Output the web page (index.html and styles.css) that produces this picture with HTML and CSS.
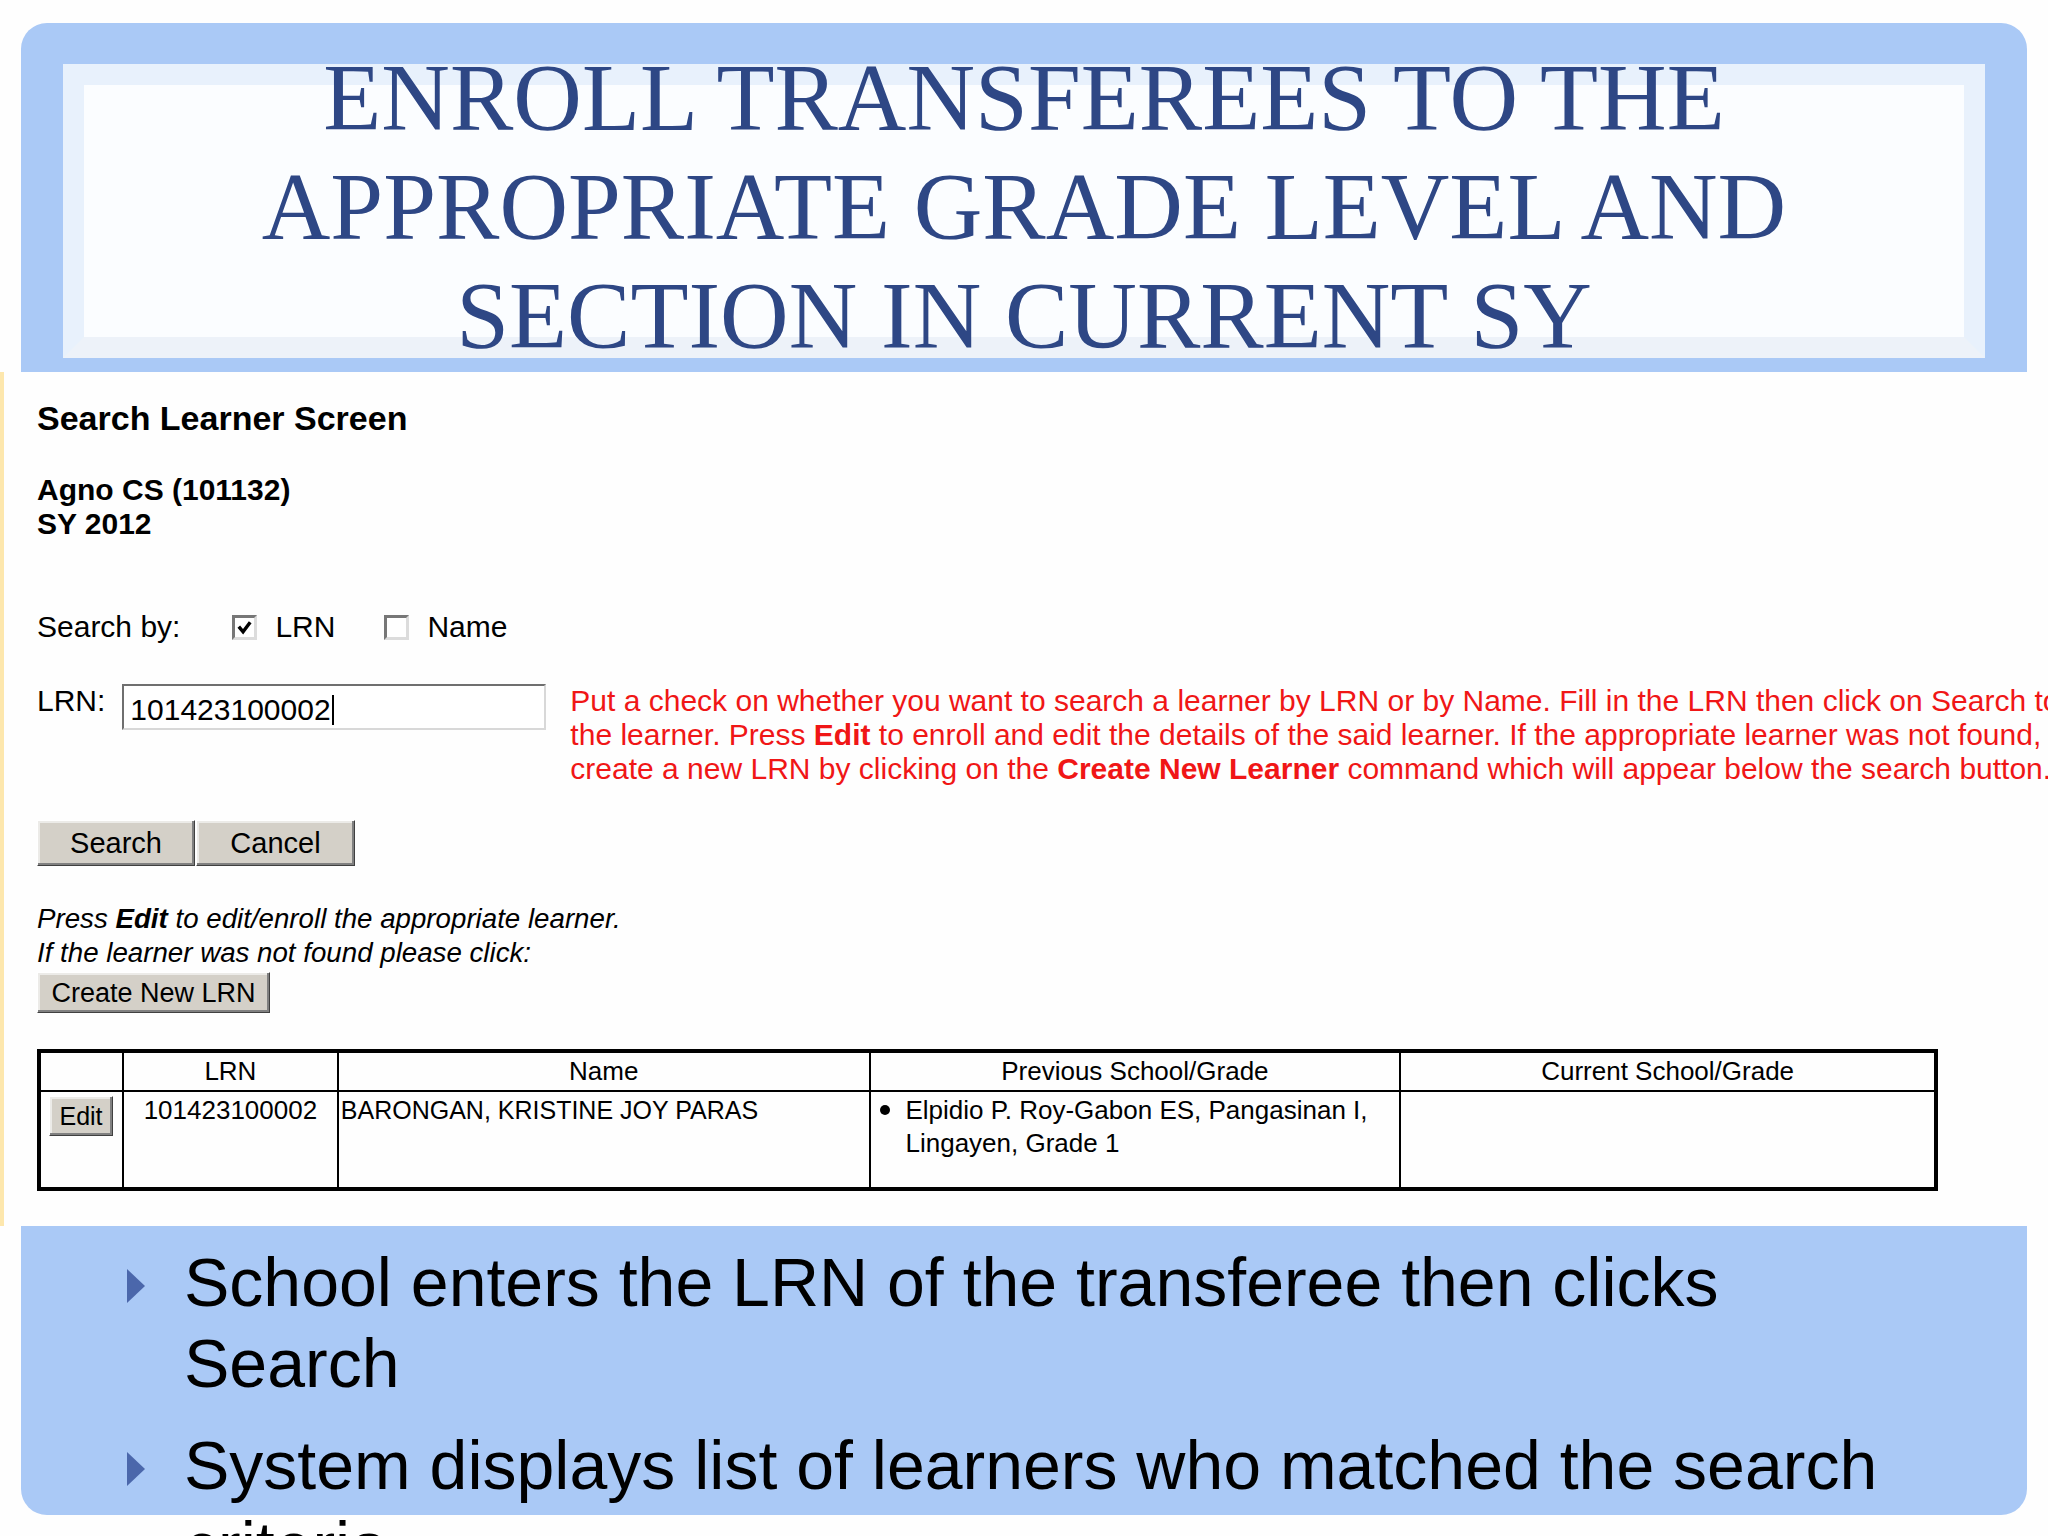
FILE: index.html
```html
<!DOCTYPE html>
<html lang="en">
<head>
<meta charset="utf-8">
<title>Enroll Transferees</title>
<link rel="stylesheet" href="styles.css">
</head>
<body>
<div class="slide">
  <header class="title-box">
    <div class="title-panel">
      <h1 class="title">ENROLL TRANSFEREES TO THE<br>APPROPRIATE GRADE LEVEL AND<br>SECTION IN CURRENT SY</h1>
    </div>
  </header>

  <main class="screen">
    <h2 class="screen-title">Search Learner Screen</h2>
    <p class="school">Agno CS (101132)<br>SY 2012</p>

    <div class="search-by">
      <span class="label">Search by:</span>
      <span class="check"><svg viewBox="0 0 20 20" width="20" height="20"><path d="M4 9 L8.5 14.5 L16 4.5" fill="none" stroke="#000" stroke-width="3.6"/></svg></span>
      <span class="opt">LRN</span>
      <span class="check check-second"></span>
      <span class="opt">Name</span>
    </div>

    <div class="lrn-row">
      <span class="label">LRN:</span>
      <div class="field">101423100002<span class="caret"></span></div>
      <p class="hint">Put a check on whether you want to search a learner by LRN or by Name. Fill in the LRN then click on Search to<br>the learner. Press <b>Edit</b> to enroll and edit the details of the said learner. If the appropriate learner was not found,<br>create a new LRN by clicking on the <b>Create New Learner</b> command which will appear below the search button.</p>
    </div>

    <div class="actions">
      <button class="btn btn-lg">Search</button>
      <button class="btn btn-lg">Cancel</button>
    </div>

    <p class="note">Press <b>Edit</b> to edit/enroll the appropriate learner.<br>If the learner was not found please click:</p>
    <button class="btn btn-create">Create New LRN</button>

    <table class="results">
      <colgroup>
        <col class="c-edit"><col class="c-lrn"><col class="c-name"><col class="c-prev"><col class="c-cur">
      </colgroup>
      <thead>
        <tr><th></th><th>LRN</th><th>Name</th><th>Previous School/Grade</th><th>Current School/Grade</th></tr>
      </thead>
      <tbody>
        <tr>
          <td class="edit-cell"><button class="btn btn-edit">Edit</button></td>
          <td class="lrn-cell">101423100002</td>
          <td class="name-cell">BARONGAN, KRISTINE JOY PARAS</td>
          <td><ul class="prev-list"><li>Elpidio P. Roy-Gabon ES, Pangasinan I,<br>Lingayen, Grade 1</li></ul></td>
          <td></td>
        </tr>
      </tbody>
    </table>
  </main>

  <section class="summary">
    <ul class="points">
      <li>School enters the LRN of the transferee then clicks Search</li>
      <li>System displays list of learners who matched the search criteria</li>
    </ul>
  </section>
</div>
</body>
</html>
```

FILE: styles.css
```css
html, body {
  margin: 0;
  padding: 0;
}
body {
  width: 2048px;
  height: 1536px;
  overflow: hidden;
  background: #fefefe;
  font-family: "Liberation Sans", Arial, sans-serif;
  color: #000;
}
.slide {
  padding-top: 23px;
}

/* ---------- Title ---------- */
.title-box {
  margin: 0 21px;
  height: 349px;
  box-sizing: border-box;
  padding: 41px 42px 14px;
  background: #aac9f6;
  border-radius: 26px 26px 0 0;
}
.title-panel {
  height: 294px;
  box-sizing: border-box;
  border: 21px solid #e8f1fc;
  border-bottom-color: #edf2f9;
  background: #fbfdff;
}
.title {
  margin: -41px 0 0;
  font-family: "Liberation Serif", "Times New Roman", serif;
  font-weight: normal;
  font-size: 95px;
  line-height: 109px;
  color: #2e4785;
  text-align: center;
  white-space: nowrap;
}

/* ---------- Screen capture ---------- */
.screen {
  height: 854px;
  box-sizing: border-box;
  border-left: 4px solid #fde7ad;
  padding-left: 33px;
  overflow: hidden;
}
.screen-title {
  margin: 26px 0 0;
  font-size: 34px;
  line-height: 40px;
  font-weight: bold;
}
.school {
  margin: 35px 0 0;
  font-size: 30px;
  line-height: 34px;
  font-weight: bold;
}
.search-by {
  margin-top: 69px;
  display: flex;
  align-items: center;
  height: 34px;
  font-size: 30px;
  line-height: 34px;
}
.label {
  flex-shrink: 0;
  font-size: 30px;
  line-height: 34px;
}
.check {
  flex-shrink: 0;
  width: 25px;
  height: 25px;
  box-sizing: border-box;
  border: 3px solid;
  border-color: #777 #dcdcdc #dcdcdc #777;
  background: #fff;
  margin-left: 52px;
  display: flex;
  align-items: center;
  justify-content: center;
}
.check svg {
  width: 19px;
  height: 19px;
}
.check-second {
  margin-left: 49px;
}
.opt {
  margin-left: 18px;
}

.lrn-row {
  margin-top: 40px;
  display: flex;
  align-items: flex-start;
}
.field {
  flex-shrink: 0;
  margin-left: 17px;
  width: 424px;
  height: 46px;
  box-sizing: border-box;
  border: 2px solid;
  border-color: #6f6f6f #d8d8d8 #d8d8d8 #6f6f6f;
  background: #fff;
  padding: 6px 0 0 6px;
  font-size: 30px;
  line-height: 36px;
  display: flex;
  align-items: flex-start;
}
.caret {
  display: inline-block;
  width: 2px;
  height: 30px;
  margin: 3px 0 0 1px;
  background: #000;
}
.hint {
  flex-shrink: 0;
  margin: 0 0 0 24px;
  color: #f01616;
  font-size: 30px;
  line-height: 34px;
  white-space: nowrap;
}

.actions {
  margin-top: 34px;
  display: flex;
}
.btn {
  font-family: "Liberation Sans", Arial, sans-serif;
  color: #000;
  background: #d4d0c8;
  border: 1px solid;
  border-color: #ffffff #404040 #404040 #ffffff;
  box-shadow: inset -2px -2px 0 #808080, inset 2px 2px 0 #ecebe8;
  padding: 0;
  box-sizing: border-box;
  display: block;
}
.btn-lg {
  width: 158px;
  height: 46px;
  font-size: 29px;
  line-height: 40px;
}
.btn-lg + .btn-lg {
  margin-left: 1px;
  width: 159px;
}
.note {
  margin: 36px 0 0;
  font-size: 27.7px;
  line-height: 34px;
  font-style: italic;
}
.btn-create {
  margin-top: 2px;
  width: 233px;
  height: 41px;
  font-size: 27px;
  line-height: 36px;
}

.results {
  margin-top: 36px;
  width: 1901px;
  border-collapse: collapse;
  border: 4px solid #000;
  font-size: 26px;
}
.c-edit { width: 84px; }
.c-lrn { width: 215px; }
.c-name { width: 533px; }
.c-prev { width: 532px; }
.c-cur { width: 537px; }
.results th,
.results td {
  border: 2px solid #000;
  padding: 0 3px;
}
.results th {
  height: 37px;
  font-weight: normal;
  line-height: 33px;
  text-align: center;
}
.results td {
  height: 91px;
  vertical-align: top;
  line-height: 33px;
  padding-top: 2px;
}
.results .lrn-cell {
  text-align: center;
}
.results .name-cell {
  font-size: 25px;
  padding-left: 2px;
}
.results .edit-cell {
  padding: 4px 0 0 8px;
}
.btn-edit {
  width: 64px;
  height: 40px;
  font-size: 25px;
  line-height: 34px;
}
.prev-list {
  list-style: none;
  margin: 0;
  padding: 0 0 0 32px;
  position: relative;
}
.prev-list li::before {
  content: "";
  position: absolute;
  left: 6px;
  top: 11px;
  width: 10px;
  height: 10px;
  border-radius: 50%;
  background: #000;
}

/* ---------- Summary ---------- */
.summary {
  margin: 0 21px;
  height: 289px;
  box-sizing: border-box;
  padding-top: 16px;
  background: #aac9f6;
  border-radius: 0 0 26px 26px;
}
.points {
  list-style: none;
  margin: 0;
  padding: 0 97px 0 163px;
}
.points li {
  position: relative;
  font-size: 68px;
  line-height: 81px;
  color: #000;
}
.points li + li {
  margin-top: 21px;
}
.points li::before {
  content: "";
  position: absolute;
  left: -57px;
  top: 27px;
  width: 0;
  height: 0;
  border-top: 17px solid transparent;
  border-bottom: 17px solid transparent;
  border-left: 18px solid #4b67ab;
}
```
